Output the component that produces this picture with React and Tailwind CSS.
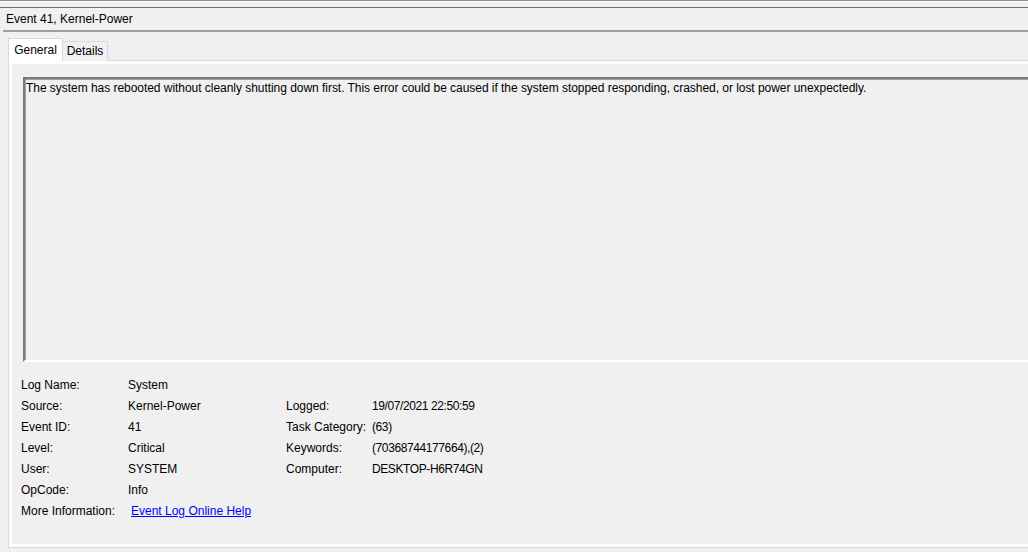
import React from 'react';

const rows = [
  { label: 'Log Name:', value: 'System' },
  { label: 'Source:', value: 'Kernel-Power', label2: 'Logged:', value2: '19/07/2021 22:50:59' },
  { label: 'Event ID:', value: '41', label2: 'Task Category:', value2: '(63)' },
  { label: 'Level:', value: 'Critical', label2: 'Keywords:', value2: '(70368744177664),(2)' },
  { label: 'User:', value: 'SYSTEM', label2: 'Computer:', value2: 'DESKTOP-H6R74GN' },
  { label: 'OpCode:', value: 'Info' },
];

const App = () => {
  return (
    <div
      className="w-[1028px] h-[552px] overflow-hidden bg-[#f0f0f0] text-black text-[12px]"
      style={{ fontFamily: '"Liberation Sans", Arial, sans-serif' }}
    >
      {/* Top edge */}
      <div className="h-px bg-[#8c8c8c]" />
      <div className="h-px bg-white" />
      <div className="h-[5px]" />
      <div className="h-px bg-[#6d6d6d]" />

      {/* Title */}
      <div className="h-[22px] flex items-center pl-[6px]">Event 41, Kernel-Power</div>
      <div className="ml-[3px] h-[2px] bg-[#a0a0a0]" />

      {/* Tabs */}
      <div className="mt-[6px] ml-[8px] w-[1040px]">
        <div className="flex items-end h-[23px] -mb-px relative z-10">
          <div className="h-[23px] w-[55px] flex items-center justify-center bg-white border border-b-0 border-[#d9d9d9] pb-[1px]">
            General
          </div>
          <div className="h-[20px] w-[45px] flex items-center justify-center bg-[#f0f0f0] border border-b-0 border-l-0 border-[#d9d9d9] pb-[1px]">
            Details
          </div>
        </div>

        {/* Panel */}
        <div className="h-[488px] border border-[#d9d9d9] bg-white p-[3px]">
          <div className="h-full bg-[#f0f0f0] pt-[13px] pl-[11px]">
            {/* Description box */}
            <div className="h-[285px] border-t-2 border-l-2 border-t-[#7a7a7a] border-l-[#7a7a7a] border-b-2 border-b-white border-r-0 relative">
              <div className="absolute inset-0 border-t border-l border-[#a0a0a0] pointer-events-none" style={{ borderRightWidth: 0, borderBottomWidth: 0 }} />
              <div className="pl-[1px] pt-[1px] leading-[16px] tracking-[-0.04px]">
                The system has rebooted without cleanly shutting down first. This error could be caused if the system stopped responding, crashed, or lost power unexpectedly.
              </div>
            </div>

            {/* Properties */}
            <div className="mt-[12px] -ml-[2px]">
              {rows.map((r) => (
                <div key={r.label} className="flex h-[21px] items-center">
                  <div className="w-[107px]">{r.label}</div>
                  <div className="w-[158px]">{r.value}</div>
                  {r.label2 && (
                    <>
                      <div className="w-[86px]">{r.label2}</div>
                      <div className="tracking-[-0.4px]">{r.value2}</div>
                    </>
                  )}
                </div>
              ))}
              <div className="flex h-[21px] items-center">
                <div className="w-[110px]">More Information:</div>
                <a href="#" className="text-[#0000ff] underline">Event Log Online Help</a>
              </div>
            </div>
          </div>
        </div>
      </div>
    </div>
  );
};

export default App;
